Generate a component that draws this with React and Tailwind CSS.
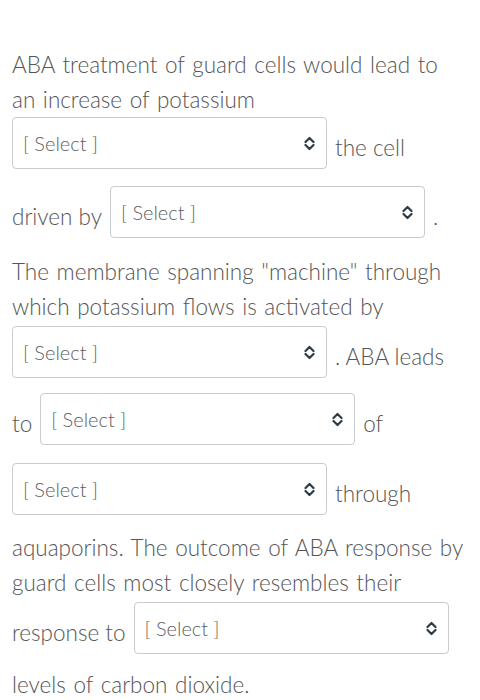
import React from "react";

function Chevrons() {
  return (
    <svg width="11" height="15" viewBox="0 0 11 15" fill="none" className="shrink-0">
      <path d="M1.5 6L5.5 2l4 4M1.5 9l4 4 4-4" stroke="#2d3b45" strokeWidth="2.2" strokeLinecap="round" strokeLinejoin="round" />
    </svg>
  );
}

function Select() {
  return (
    <div className="w-[315px] h-[52px] shrink-0 flex items-center justify-between pl-[10px] pr-[11px] border border-[#c7cdd1] rounded-[4px] bg-white [word-spacing:0px]">
      <span className="leading-[35px] text-[20px] text-[#5f5f5f]">[ Select ]</span>
      <Chevrons />
    </div>
  );
}

// text sitting next to a select, baseline lines up with the select row
function Side({ children }) {
  return <span className="mt-[13px] leading-[35px] whitespace-nowrap [word-spacing:0px]">{children}</span>;
}

export default function App() {
  return (
    <div
      className="min-h-screen bg-white px-3 pt-[47px] text-[22.5px] font-light text-[#555555] [word-spacing:1.5px]"
      style={{ fontFamily: "Lato, 'Open Sans', sans-serif" }}
    >
      <p className="leading-[35px]">ABA treatment of guard cells would lead to</p>
      <p className="leading-[35px]">an increase of potassium</p>

      <div className="flex items-start gap-2 mb-[17px]">
        <Select />
        <Side>the cell</Side>
      </div>

      <div className="flex items-start gap-2 mb-[16px]">
        <Side>driven by</Side>
        <Select />
        <Side>.</Side>
      </div>

      <p className="leading-[35px]">The membrane spanning "machine" through</p>
      <p className="leading-[35px]">which potassium flows is activated by</p>

      <div className="flex items-start gap-2 mt-[2px] mb-[15px]">
        <Select />
        <Side>. ABA leads</Side>
      </div>

      <div className="flex items-start gap-2 mb-[18px]">
        <Side>to</Side>
        <Select />
        <Side>of</Side>
      </div>

      <div className="flex items-start gap-2 mb-[15px]">
        <Select />
        <Side>through</Side>
      </div>

      <p className="leading-[35px]">aquaporins. The outcome of ABA response by</p>
      <p className="leading-[35px]">guard cells most closely resembles their</p>

      <div className="flex items-start gap-2 mt-[2px] mb-[13px]">
        <Side>response to</Side>
        <Select />
      </div>

      <p className="leading-[35px]">levels of carbon dioxide.</p>
    </div>
  );
}
